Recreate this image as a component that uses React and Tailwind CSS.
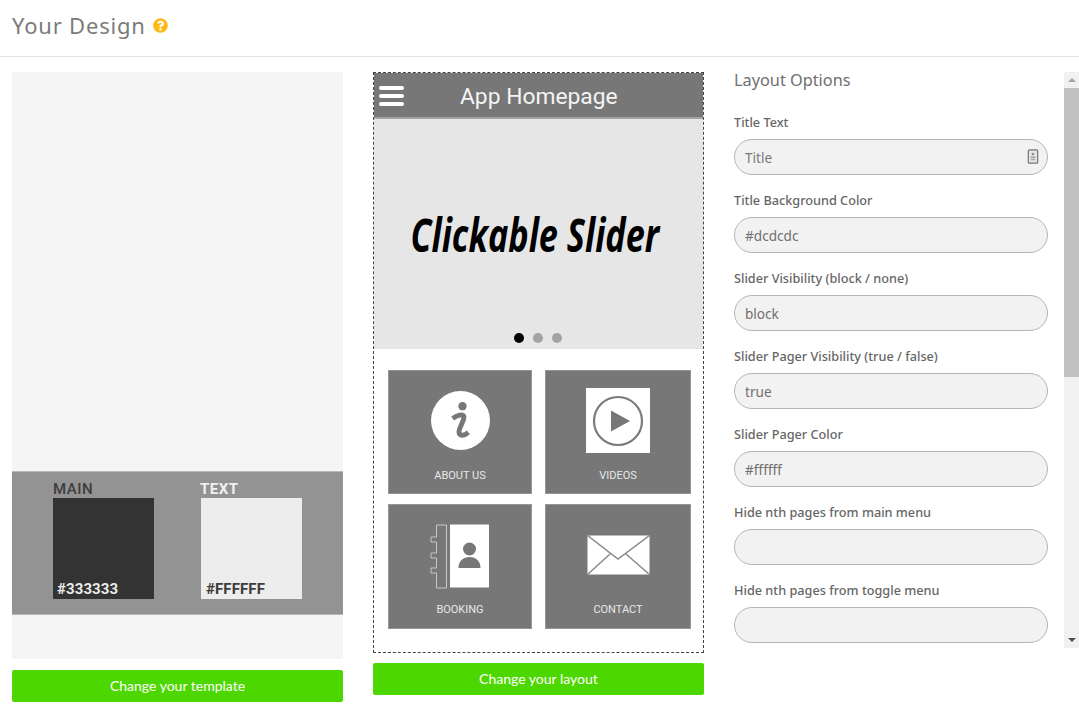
import React from "react";
import { FaQuestionCircle } from "react-icons/fa";

const fields = [
  { label: "Title Text", placeholder: "Title", icon: true },
  { label: "Title Background Color", value: "#dcdcdc" },
  { label: "Slider Visibility (block / none)", value: "block" },
  { label: "Slider Pager Visibility (true / false)", value: "true" },
  { label: "Slider Pager Color", value: "#ffffff" },
  { label: "Hide nth pages from main menu", value: "" },
  { label: "Hide nth pages from toggle menu", value: "" },
];

const InfoIcon = () => (
  <svg width="59" height="59" viewBox="0 0 60 60" className="mt-[20px]">
    <circle cx="30" cy="30" r="30" fill="#ffffff" />
    <circle cx="32" cy="15.500" r="4.200" fill="#777777" />
    <path
      d="M22 28C26 25 33 22.500 33.500 26C34 30 28 38 28.500 42C29 46.500 34 45.500 38 42"
      fill="none"
      stroke="#777777"
      strokeWidth="5"
    />
  </svg>
);

const PlayIcon = () => (
  <div className="mt-[17px] flex h-[65px] w-[64px] items-center justify-center bg-white">
    <svg width="52" height="52" viewBox="0 0 52 52">
      <circle cx="26" cy="26" r="24" fill="none" stroke="#7b7b7b" strokeWidth="2.200" />
      <path d="M19 15.500L38 26L19 36.500z" fill="#777777" />
    </svg>
  </div>
);

const BookIcon = () => (
  <svg width="60" height="65" viewBox="0 0 60 65" className="mt-[19px]">
    <path
      d="M6.500 1h10v63h-10v-15h-5.500v-5h5.500v-10h-5.500v-5h5.500v-11h-5.500v-5h5.500z"
      fill="none"
      stroke="#c8c8c8"
      strokeWidth="1"
    />
    <rect x="20" y="0.500" width="39" height="63" fill="#ffffff" />
    <circle cx="39.500" cy="25" r="6.500" fill="#777777" />
    <path d="M28.500 44c0-7 4.500-11 11-11s11 4 11 11z" fill="#777777" />
  </svg>
);

const MailIcon = () => (
  <svg width="63" height="40" viewBox="0 0 63 40" className="mt-[30px]">
    <rect x="0.500" y="0.500" width="62" height="39" fill="#ffffff" />
    <path
      d="M0.500 0.500L31 24L62.500 0.500M0.500 39.500L23 19M62.500 39.500L39 19"
      fill="none"
      stroke="#8a8a8a"
      strokeWidth="1.500"
    />
  </svg>
);

const tiles = [
  { label: "ABOUT US", Icon: InfoIcon },
  { label: "VIDEOS", Icon: PlayIcon },
  { label: "BOOKING", Icon: BookIcon },
  { label: "CONTACT", Icon: MailIcon },
];

const GreenButton = ({ children, className }) => (
  <button
    className={`h-8 w-[331px] rounded-[2px] bg-[#4dd700] pb-[2px] text-center text-[14px] text-white ${className}`}
    style={{ fontFamily: "Lato, sans-serif" }}
  >
    {children}
  </button>
);

const App = () => {
  return (
    <div className="h-[716px] w-[1079px] overflow-hidden bg-white" style={{ fontFamily: "'Noto Sans', sans-serif" }}>
      <div className="flex h-[57px] items-start gap-[7px] border-b border-[#e3e3e3] pl-3 pt-[8px]">
        <h1 className="text-[22px] leading-[34px] tracking-[0.8px] text-[#7b7b7b]">Your Design</h1>
        <FaQuestionCircle className="mt-[10px] text-[15px] text-[#fdb813]" />
      </div>

      <div className="flex pl-3 pt-[15px]">
        {/* template preview */}
        <div className="w-[331px]">
          <div className="h-[587px] bg-[#f5f5f5] pt-[399px]">
            <div
              className="flex h-[144px] gap-[47px] border-y border-[#b9b9b9] bg-[#939393] pl-[41px] pt-[8px]"
              style={{ fontFamily: "Roboto, sans-serif" }}
            >
              <div>
                <div className="text-[15px] font-medium leading-[18px] tracking-[0.5px] text-[#3d3d3d]">MAIN</div>
                <div className="flex h-[101px] w-[101px] items-end bg-[#333333] pl-[4px]">
                  <span className="text-[15px] font-bold leading-[20px] tracking-[0.1px] text-[#ececec]">#333333</span>
                </div>
              </div>
              <div>
                <div className="-ml-px text-[15px] font-bold leading-[18px] tracking-[0.5px] text-[#f0f0f0]">TEXT</div>
                <div className="flex h-[101px] w-[101px] items-end bg-[#ededed] pl-[5px]">
                  <span className="text-[15px] font-bold leading-[20px] tracking-[0.1px] text-[#3d3d3d]">#FFFFFF</span>
                </div>
              </div>
            </div>
          </div>
          <GreenButton className="mt-[11px]">Change your template</GreenButton>
        </div>

        {/* layout preview */}
        <div className="ml-[30px] w-[331px]">
          <div className="h-[581px] border border-dashed border-[#444444] bg-white">
            <div className="flex h-[46px] items-center border-b-2 border-[#a3a3a3] bg-[#777777]">
              <div className="ml-[5px] mt-[2px] flex w-[25px] flex-col gap-[4px]">
                <span className="h-1 rounded-full bg-white" />
                <span className="h-1 rounded-full bg-white" />
                <span className="h-1 rounded-full bg-white" />
              </div>
              <span
                className="ml-[56px] mt-[4px] text-[22.8px] text-[#f4f4f4]"
                style={{ fontFamily: "Roboto, sans-serif" }}
              >
                App Homepage
              </span>
            </div>
            <div className="relative flex h-[230px] items-start justify-center bg-[#e6e6e6] pr-[7px] pt-[85px]">
              <span
                className="scale-x-[0.745] whitespace-nowrap text-[46px] font-bold italic leading-[60px] text-black"
                style={{ fontFamily: "'Open Sans', sans-serif" }}
              >
                Clickable Slider
              </span>
              <div className="absolute bottom-[6px] left-0 right-0 flex justify-center gap-[9px] pr-[1px]">
                <span className="h-[10px] w-[10px] rounded-full bg-black" />
                <span className="h-[10px] w-[10px] rounded-full bg-[#a3a3a3]" />
                <span className="h-[10px] w-[10px] rounded-full bg-[#a3a3a3]" />
              </div>
            </div>
            <div className="grid grid-cols-[144px_146px] grid-rows-[124px_125px] gap-x-[13px] gap-y-[10px] pl-[14px] pt-[21px]">
              {tiles.map(({ label, Icon }) => (
                <div key={label} className="flex flex-col items-center border border-[#969696] bg-[#777777]">
                  <div className="h-[85px]">
                    <Icon />
                  </div>
                  <span
                    className="mt-[12px] text-[11px] leading-[16px] text-[#e8e8e8]"
                    style={{ fontFamily: "Roboto, sans-serif" }}
                  >
                    {label}
                  </span>
                </div>
              ))}
            </div>
          </div>
          <GreenButton className="mt-[10px]">Change your layout</GreenButton>
        </div>

        {/* options */}
        <div className="ml-[30px] flex h-[576px] w-[345px]">
          <div className="h-full w-[330px]">
            <h2 className="-mt-px text-[16.3px] leading-[18px] text-[#6f6f6f]">Layout Options</h2>
            <div className="mt-[24px]">
              {fields.map((field) => (
                <div key={field.label} className="mb-[16px]">
                  <label className="block text-[12.7px] font-medium leading-[18px] text-[#666666]">{field.label}</label>
                  <div className="relative mt-[8px] w-[314px]">
                    <input
                      readOnly
                      value={field.value || ""}
                      placeholder={field.placeholder}
                      className="h-9 w-full rounded-[18px] border border-[#b5b5b5] bg-[#f2f2f2] px-[10px] text-[13.6px] text-[#6f6f6f] outline-none placeholder:text-[#7a7a7a]"
                    />
                    {field.icon && (
                      <svg width="12" height="15" viewBox="0 0 12 16" className="absolute right-[9px] top-[10px]">
                        <rect x="1" y="1" width="10" height="14" rx="1" fill="#e4e4e4" stroke="#777777" strokeWidth="1.300" />
                        <path d="M6 3.500l1.500 3h-3z" fill="#777777" />
                        <rect x="3.500" y="8" width="5" height="1.500" fill="#999999" />
                        <rect x="3.500" y="10.500" width="5" height="1.500" fill="#aaaaaa" />
                      </svg>
                    )}
                  </div>
                </div>
              ))}
            </div>
          </div>
          <div className="flex h-full w-[15px] flex-col items-center bg-[#f1f1f1]">
            <div className="flex h-[16px] items-center">
              <span className="h-0 w-0 border-x-[4px] border-b-[4px] border-x-transparent border-b-[#a3a3a3]" />
            </div>
            <div className="h-[289px] w-[15px] bg-[#c1c1c1]" />
            <div className="flex-1" />
            <div className="flex h-[16px] items-center">
              <span className="h-0 w-0 border-x-[4px] border-t-[4px] border-x-transparent border-t-[#505050]" />
            </div>
          </div>
        </div>
      </div>
    </div>
  );
};

export default App;
